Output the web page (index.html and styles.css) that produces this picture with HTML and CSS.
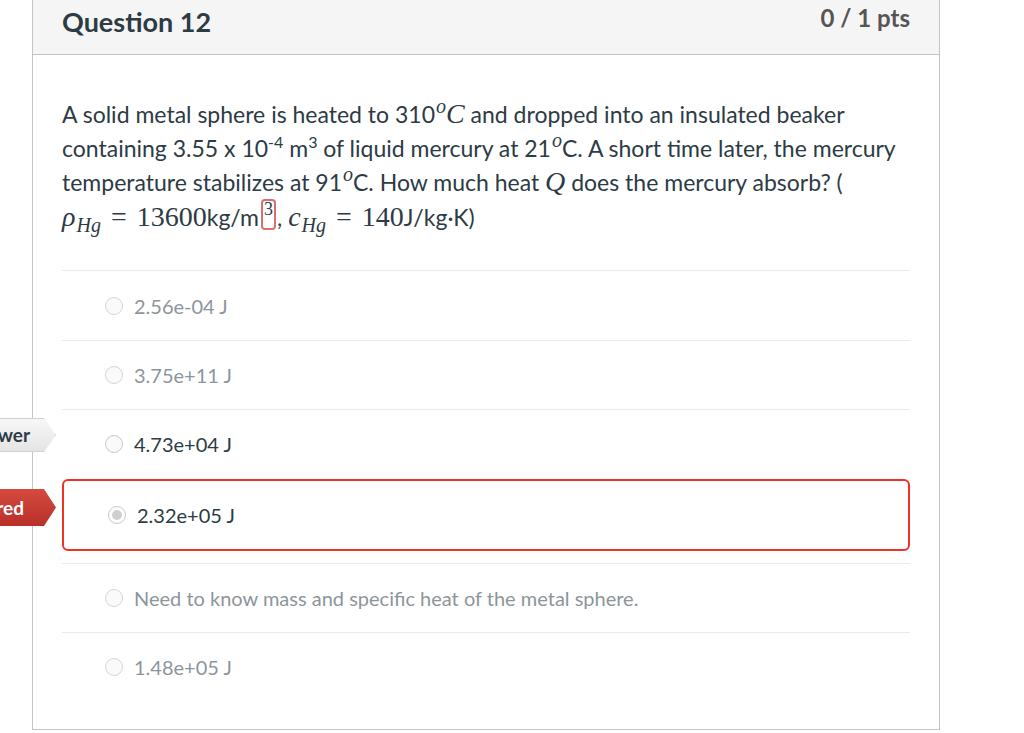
FILE: index.html
```html
<!DOCTYPE html>
<html>
<head>
<meta charset="utf-8">
<link rel="stylesheet" href="styles.css">
</head>
<body>
<div class="card">
  <div class="header">
    <span class="title">Question 12</span>
    <span class="pts">0 / 1 pts</span>
  </div>
  <div class="content">
    <p class="question">A solid metal sphere is heated to 310<sup class="mi">o</sup><span class="mi">C</span> and dropped into an insulated beaker<br>containing 3.55 x 10<sup class="up">-4</sup> m<sup class="up">3</sup> of liquid mercury at 21<sup class="mi">o</sup>C. A short time later, the mercury<br>temperature stabilizes at 91<sup class="mi">o</sup>C. How much heat <span class="mi">Q</span> does the mercury absorb? (<br><span class="mi">ρ</span><sub class="mi">Hg</sub><span class="mn"> = 13600</span>kg/m<span class="err">3</span>, <span class="mi">c</span><sub class="mi">Hg</sub><span class="mn"> = 140</span>J/kg·K)</p>
    <div class="answers">
      <div class="answer dim first"><span class="radio"></span><span class="atext">2.56e-04 J</span></div>
      <div class="answer dim"><span class="radio"></span><span class="atext">3.75e+11 J</span></div>
      <div class="answer correct"><span class="flag flag-grey">Correct Answer</span><span class="radio"></span><span class="atext">4.73e+04 J</span></div>
      <div class="answer selected"><span class="flag flag-red">You Answered</span><div class="redbox"><span class="radio checked"></span><span class="atext">2.32e+05 J</span></div></div>
      <div class="answer dim"><span class="radio"></span><span class="atext">Need to know mass and specific heat of the metal sphere.</span></div>
      <div class="answer dim last"><span class="radio"></span><span class="atext">1.48e+05 J</span></div>
    </div>
  </div>
</div>
</body>
</html>
```
FILE: styles.css
```css
html, body {
  margin: 0;
  padding: 0;
  background: #fff;
  font-family: Lato, "Noto Sans", sans-serif;
  color: #2d3b45;
}
.card {
  margin-left: 32px;
  width: 906px;
  height: 729px;
  border: 1px solid #c4c4c4;
  border-top: none;
}
.header {
  height: 54px;
  background: #f5f5f5;
  border-bottom: 1px solid #c4c4c4;
  display: flex;
  justify-content: space-between;
  align-items: flex-start;
  padding: 0 29px 0 29px;
}
.title {
  font-size: 27px;
  line-height: 32px;
  font-weight: 700;
  margin-top: 6px;
  color: #2d3b45;
}
.pts {
  font-size: 24px;
  line-height: 30px;
  font-weight: 700;
  color: #555;
  margin-top: 3px;
}
.content {
  padding: 0 29px;
}
.question {
  margin: 42px 0 0 0;
  height: 138px;
  font-size: 23px;
  line-height: 34px;
  color: #2d3b45;
}
.mi {
  font-family: "Liberation Serif", "DejaVu Serif", serif;
  font-style: italic;
  font-size: 28px;
  line-height: 0;
}
sup.mi {
  font-size: 20px;
  vertical-align: 10px;
  line-height: 0;
  margin-left: 1px;
}
sub.mi {
  font-size: 20px;
  vertical-align: -6px;
  line-height: 0;
  margin-left: 1px;
}
.mn {
  font-family: "Liberation Serif", "DejaVu Serif", serif;
  font-size: 28px;
  line-height: 0;
  white-space: pre;
  word-spacing: 3px;
}
.up {
  font-size: 16px;
  vertical-align: 9px;
  line-height: 0;
}
.err {
  box-sizing: border-box;
  font-family: "Liberation Serif", serif;
  font-size: 18px;
  display: inline-block;
  border: 2px solid #d9706d;
  border-radius: 4px;
  line-height: 16px;
  width: 15px;
  height: 31px;
  text-align: center;
  vertical-align: 11px;
  margin: 0 1px -30px 2px;
}
.answers {
  margin-top: 35px;
}
.answer {
  position: relative;
  height: 68px;
  border-top: 1px solid #eaeaea;
  display: flex;
  align-items: center;
  padding-left: 43px;
  font-size: 20px;
}
.answer.first {
  height: 69px;
}
.answer.dim .atext {
  color: #8d959b;
}
.answer.correct .atext {
  color: #2d3b45;
}
.answer.selected {
  height: 84px;
  padding-left: 0;
  align-items: flex-start;
  border-top-color: transparent;
}
.redbox {
  box-sizing: border-box;
  width: 848px;
  height: 72px;
  border: 2px solid #ee3224;
  border-radius: 6px;
  display: flex;
  align-items: center;
  padding-left: 44px;
}
.radio {
  box-sizing: border-box;
  width: 18px;
  height: 18px;
  border-radius: 50%;
  border: 1px solid #d6d6d6;
  background: #fafafa;
  margin-right: 11px;
  position: relative;
  flex: none;
}
.answer.correct .radio {
  border-color: #c8c8c8;
}
.radio.checked {
  border: 1px solid #c8c8c8;
  background: #fff;
}
.radio.checked::after {
  content: "";
  position: absolute;
  left: 3px;
  top: 3px;
  width: 10px;
  height: 10px;
  border-radius: 50%;
  background: #cfcfcf;
}
.atext {
  color: #2d3b45;
  white-space: nowrap;
}
.redbox .atext {
  color: #2d3b45;
}
.flag {
  position: absolute;
  right: calc(100% + 6px);
  height: 34px;
  line-height: 34px;
  padding: 0 26px 0 14px;
  font-size: 19px;
  font-weight: 700;
  white-space: nowrap;
  clip-path: polygon(0 0, calc(100% - 12px) 0, 100% 50%, calc(100% - 12px) 100%, 0 100%);
}
.flag-grey {
  top: 8px;
  color: #2d3b45;
  background: linear-gradient(#f8f8f8, #e4e4e4);
  box-shadow: inset 0 0 0 1px #cfcfcf;
}
.flag-red {
  top: 10px;
  height: 37px;
  line-height: 37px;
  padding-right: 32px;
  color: #fff;
  background: linear-gradient(#d44a3e, #b8302a);
}
```
